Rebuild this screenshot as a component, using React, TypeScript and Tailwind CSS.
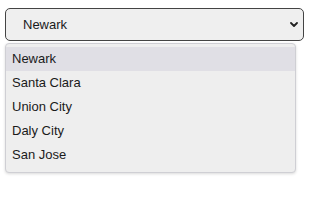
export default function App() {
  const cities = ['Newark', 'Santa Clara', 'Union City', 'Daly City', 'San Jose'];
  return (
    <div className="w-[323px] h-[204px] bg-white pt-2 pl-[5px] font-['Liberation_Sans',Arial,sans-serif] text-[13px] text-[#1a1a1a]">
      <div className="w-[299px] h-[33px] flex items-center justify-between pl-[17px] pr-[5px] rounded-[5px] border border-[#444] bg-[#efefef]">
        <span>Newark</span>
        <svg width="8" height="5" viewBox="0 0 8 5" fill="none" stroke="#222" strokeWidth="1.8" strokeLinecap="round" strokeLinejoin="round">
          <polyline points="1 1 4 4 7 1" />
        </svg>
      </div>
      <div className="mt-[2px] w-[291px] pt-[3px] pb-[5px] rounded-[4px] border border-[#cfcfd4] bg-[#eeeeee] shadow-[0_1px_3px_rgba(0,0,0,0.15)]">
        {cities.map((c, i) => (
          <div key={c} className={`h-6 flex items-center pl-[6px] ${i === 0 ? 'bg-[#e0dfe5]' : ''}`}>
            {c}
          </div>
        ))}
      </div>
    </div>
  );
}
